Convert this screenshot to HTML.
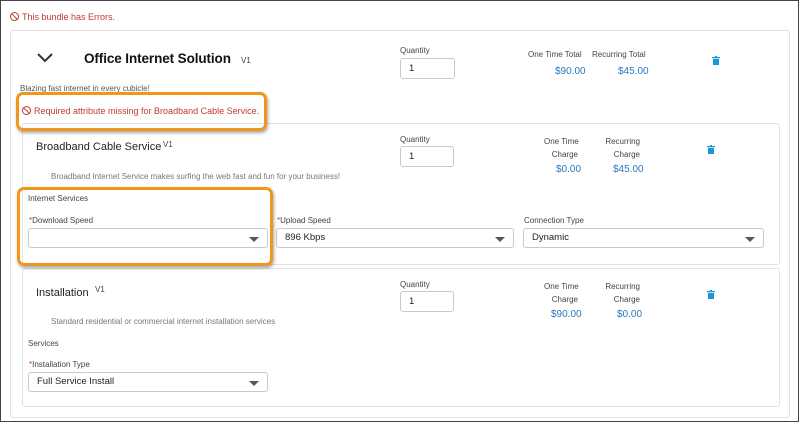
<!DOCTYPE html><html><head><style>
body{margin:0;width:799px;height:422px;position:relative;background:#fff;font-family:"Liberation Sans",sans-serif;overflow:hidden}
.a{position:absolute;white-space:nowrap}
.frame{position:absolute;left:0;top:0;width:797px;height:420px;border:1px solid #444}
.card{position:absolute;border:1px solid #e3e3e3;border-radius:3px;background:#fff}
.s{font-size:8px;color:#444}
.blue{color:#2a78c0;font-size:10px}
.inp{position:absolute;border:1px solid #c9c9c9;border-radius:3px;background:#fff;font-size:9.5px;color:#222;box-sizing:border-box;padding-left:8px}
.arr{position:absolute;right:8px;top:10px;width:0;height:0;border-left:5px solid transparent;border-right:5px solid transparent;border-top:5px solid #555}
.ora{position:absolute;border:3px solid #f0961e;border-radius:7px;box-shadow:1px 2px 3px rgba(0,0,0,.35)}
.err{color:#c23934;font-size:9px}
.ic{display:inline-block;width:7px;height:7px;border:1.3px solid #c23934;border-radius:50%;position:relative;vertical-align:-1px;margin-right:3px}
.ic:after{content:"";position:absolute;left:3px;top:-1px;width:1.3px;height:9px;background:#c23934;transform:rotate(-45deg)}
.tr{position:absolute;width:8px;height:9px}
</style></head><body>
<div class="frame"></div>
<div class="a err" style="left:10px;top:12px"><span class="ic"></span>This bundle has Errors.</div>
<div class="card" style="left:10px;top:30px;width:778px;height:386px"></div>
<svg class="a" style="left:37px;top:53px" width="16" height="10"><path d="M1 1L8 8L15 1" stroke="#333" stroke-width="2" fill="none"/></svg>
<div class="a" style="left:84px;top:51px;font-size:13.5px;font-weight:bold;color:#111;letter-spacing:-0.1px">Office Internet Solution</div>
<div class="a s" style="left:241px;top:56px">V1</div>
<div class="a s" style="left:400px;top:46px">Quantity</div>
<div class="inp" style="left:400px;top:58px;width:55px;height:21px;line-height:19px">1</div>
<div class="a s" style="left:528px;top:50px">One Time Total</div>
<div class="a s" style="left:592px;top:50px">Recurring Total</div>
<div class="a blue" style="left:555px;top:66px">$90.00</div>
<div class="a blue" style="left:618px;top:66px">$45.00</div>
<svg class="tr" style="left:712px;top:56px" viewBox="0 0 8 9"><rect x="0" y="1" width="8" height="1.3" fill="#1b96d2"/><rect x="3" y="0" width="2" height="1" fill="#1b96d2"/><rect x="1" y="3" width="6" height="6" fill="#1b96d2"/></svg>
<div class="a" style="left:20px;top:84px;font-size:8px;color:#555">Blazing fast internet in every cubicle!</div>
<div class="card" style="left:22px;top:123px;width:756px;height:140px"></div>
<div class="a err" style="left:22px;top:106px"><span class="ic"></span>Required attribute missing for Broadband Cable Service.</div>
<div class="a" style="left:36px;top:141px;font-size:11px;color:#222">Broadband Cable Service</div>
<div class="a s" style="left:163px;top:140px">V1</div>
<div class="a s" style="left:400px;top:135px">Quantity</div>
<div class="inp" style="left:400px;top:146px;width:54px;height:21px;line-height:19px">1</div>
<div class="a s" style="left:544px;top:135px;text-align:right;width:34px;line-height:13px">One Time<br>Charge</div>
<div class="a s" style="left:600px;top:135px;text-align:right;width:40px;line-height:13px">Recurring<br>Charge</div>
<div class="a blue" style="left:556px;top:164px">$0.00</div>
<div class="a blue" style="left:613px;top:164px">$45.00</div>
<svg class="tr" style="left:707px;top:145px" viewBox="0 0 8 9"><rect x="0" y="1" width="8" height="1.3" fill="#1b96d2"/><rect x="3" y="0" width="2" height="1" fill="#1b96d2"/><rect x="1" y="3" width="6" height="6" fill="#1b96d2"/></svg>
<div class="a" style="left:51px;top:172px;font-size:8px;color:#777">Broadband Internet Service makes surfing the web fast and fun for your business!</div>
<div class="a s" style="left:28px;top:194px">Internet Services</div>
<div class="a s" style="left:29px;top:216px"><span style="color:#c23934">*</span>Download Speed</div>
<div class="inp" style="left:28px;top:228px;width:240px;height:20px"><div class="arr" style="top:8px"></div></div>
<div class="a s" style="left:277px;top:216px"><span style="color:#c23934">*</span>Upload Speed</div>
<div class="inp" style="left:276px;top:228px;width:238px;height:20px;line-height:18px">896 Kbps<div class="arr" style="top:8px"></div></div>
<div class="a s" style="left:524px;top:216px">Connection Type</div>
<div class="inp" style="left:523px;top:228px;width:241px;height:20px;line-height:18px">Dynamic<div class="arr" style="top:8px"></div></div>
<div class="card" style="left:22px;top:268px;width:756px;height:137px"></div>
<div class="a" style="left:36px;top:287px;font-size:11px;color:#222">Installation</div>
<div class="a s" style="left:95px;top:285px">V1</div>
<div class="a s" style="left:400px;top:280px">Quantity</div>
<div class="inp" style="left:400px;top:291px;width:54px;height:21px;line-height:19px">1</div>
<div class="a s" style="left:544px;top:280px;text-align:right;width:34px;line-height:13px">One Time<br>Charge</div>
<div class="a s" style="left:600px;top:280px;text-align:right;width:40px;line-height:13px">Recurring<br>Charge</div>
<div class="a blue" style="left:551px;top:309px">$90.00</div>
<div class="a blue" style="left:617px;top:309px">$0.00</div>
<svg class="tr" style="left:707px;top:290px" viewBox="0 0 8 9"><rect x="0" y="1" width="8" height="1.3" fill="#1b96d2"/><rect x="3" y="0" width="2" height="1" fill="#1b96d2"/><rect x="1" y="3" width="6" height="6" fill="#1b96d2"/></svg>
<div class="a" style="left:51px;top:317px;font-size:8px;color:#777">Standard residential or commercial internet installation services</div>
<div class="a s" style="left:28px;top:339px">Services</div>
<div class="a s" style="left:29px;top:360px"><span style="color:#c23934">*</span>Installation Type</div>
<div class="inp" style="left:28px;top:372px;width:240px;height:20px;line-height:18px">Full Service Install<div class="arr" style="top:8px"></div></div>
<div class="ora" style="left:16px;top:92px;width:245px;height:33px"></div>
<div class="ora" style="left:17px;top:187px;width:250px;height:73px"></div>
</body></html>
